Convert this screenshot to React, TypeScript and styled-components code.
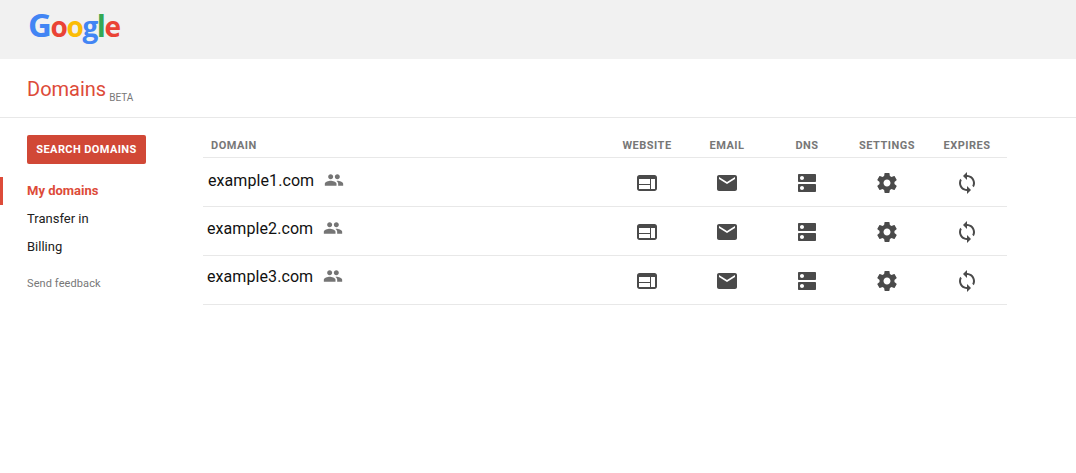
import React from "react";
import styled, { createGlobalStyle } from "styled-components";

const GlobalStyle = createGlobalStyle`
  html, body {
    margin: 0;
    padding: 0;
    background: #fff;
    font-family: Roboto, "Liberation Sans", Arial, sans-serif;
  }
`;

const Header = styled.header`
  height: 59px;
  background: #f1f1f1;
  padding-left: 28px;
  box-sizing: border-box;
`;

const Logo = styled.div`
  font-family: "Open Sans", Lato, sans-serif;
  line-height: 50px;
  font-weight: 700;
  letter-spacing: -1.4px;
  height: 59px;
`;

const LogoLetter = styled.span<{ $color: string; $size: number }>`
  color: ${(p) => p.$color};
  font-size: ${(p) => p.$size}px;
`;

const TitleBar = styled.div`
  height: 59px;
  box-sizing: border-box;
  border-bottom: 1px solid #e8e8e8;
  padding: 16px 0 0 27px;
  display: flex;
  align-items: flex-start;
`;

const Title = styled.h1`
  margin: 0;
  font-size: 20px;
  line-height: 28px;
  font-weight: 400;
  color: #dd4b39;
`;

const Beta = styled.span`
  font-size: 10px;
  line-height: 12px;
  color: #777;
  margin: 17px 0 0 3px;
`;

const Main = styled.div`
  display: flex;
  align-items: flex-start;
`;

const Sidebar = styled.aside`
  width: 203px;
  flex: none;
  padding-top: 17px;
`;

const SearchButton = styled.button`
  display: block;
  width: 119px;
  height: 29px;
  margin-left: 27px;
  padding: 0;
  border: 0;
  border-radius: 2px;
  background: #d14836;
  color: #fff;
  font-family: inherit;
  font-size: 11px;
  font-weight: 700;
  letter-spacing: 0.4px;
`;

const Nav = styled.nav`
  margin-top: 13px;
`;

const NavItem = styled.div<{ $active?: boolean }>`
  height: 28px;
  line-height: 28px;
  box-sizing: border-box;
  padding-left: ${(p) => (p.$active ? 24 : 27)}px;
  border-left: ${(p) => (p.$active ? "3px solid #dd4b39" : "0")};
  font-size: 13px;
  font-weight: ${(p) => (p.$active ? 700 : 400)};
  color: ${(p) => (p.$active ? "#dd4b39" : "#212121")};
`;

const Feedback = styled.div`
  margin: 15px 0 0 27px;
  font-size: 11px;
  line-height: 16px;
  letter-spacing: 0.1px;
  color: #777;
`;

const Table = styled.section`
  width: 804px;
  flex: none;
  padding-top: 20px;
`;

const grid = `
  display: grid;
  grid-template-columns: 1fr repeat(5, 80px);
  box-sizing: border-box;
  border-bottom: 1px solid #e8e8e8;
`;

const HeadRow = styled.div`
  ${grid}
  height: 20px;
`;

const HeadCell = styled.div<{ $left?: boolean }>`
  font-size: 11px;
  line-height: 16px;
  font-weight: 700;
  letter-spacing: 0.5px;
  color: #777;
  text-align: ${(p) => (p.$left ? "left" : "center")};
  padding-left: ${(p) => (p.$left ? "8px" : "0")};
`;

const Row = styled.div`
  ${grid}
  height: 49px;
`;

const DomainCell = styled.div<{ $nudge: number }>`
  display: flex;
  align-items: flex-start;
  padding: ${(p) => 12 - p.$nudge}px 0 0 ${(p) => 5 - Math.min(p.$nudge, 1)}px;
  gap: 10px;
`;

const DomainName = styled.span`
  font-size: 16px;
  line-height: 21px;
  letter-spacing: 0.08px;
  color: #111;
`;

const IconCell = styled.div`
  display: flex;
  justify-content: center;
  padding-top: 13px;
  color: #4a4a4a;
`;

const PeopleIcon = styled.svg`
  width: 20px;
  height: 20px;
  fill: #757575;
`;

const ActionIcon = styled.svg`
  width: 24px;
  height: 24px;
  fill: currentColor;
`;

const icons = {
  website:
    "M4.5 4h15C20.9 4 22 5.1 22 6.500v11c0 1.400-1.100 2.500-2.500 2.500h-15C3.100 20 2 18.900 2 17.500v-11C2 5.100 3.100 4 4.500 4zM4 8v5h11V8H4zm0 6v4h11v-4H4zm12-6v10h4V8h-4z",
  email:
    "M20 4H4c-1.100 0-1.990.9-1.990 2L2 18c0 1.100.9 2 2 2h16c1.100 0 2-.9 2-2V6c0-1.100-.9-2-2-2zm0 4l-8 5-8-5V6l8 5 8-5v2z",
  dns: "M20 13H4c-.55 0-1 .45-1 1v6c0 .55.45 1 1 1h16c.55 0 1-.45 1-1v-6c0-.55-.45-1-1-1zM7 19c-1.100 0-2-.9-2-2s.9-2 2-2 2 .9 2 2-.9 2-2 2zM20 3H4c-.55 0-1 .45-1 1v6c0 .55.45 1 1 1h16c.55 0 1-.45 1-1V4c0-.55-.45-1-1-1zM7 9c-1.100 0-2-.9-2-2s.9-2 2-2 2 .9 2 2-.9 2-2 2z",
  settings:
    "M19.430 12.980c.04-.32.07-.64.07-.98s-.03-.66-.07-.98l2.110-1.650c.19-.15.24-.42.12-.64l-2-3.460c-.12-.22-.39-.3-.61-.22l-2.490 1c-.52-.4-1.080-.73-1.690-.98l-.38-2.650C14.460 2.180 14.250 2 14 2h-4c-.25 0-.46.18-.49.42l-.38 2.650c-.61.25-1.170.59-1.690.98l-2.490-1c-.23-.09-.49 0-.61.22l-2 3.460c-.13.22-.07.49.12.64l2.110 1.650c-.04.32-.07.65-.07.98s.03.66.07.98l-2.110 1.650c-.19.15-.24.42-.12.64l2 3.460c.12.22.39.3.61.22l2.490-1c.52.4 1.080.73 1.690.98l.38 2.650c.03.24.24.42.49.42h4c.25 0 .46-.18.49-.42l.38-2.650c.61-.25 1.170-.59 1.690-.98l2.490 1c.23.09.49 0 .61-.22l2-3.460c.12-.22.07-.49-.12-.64l-2.110-1.650zM12 15.500c-1.930 0-3.500-1.570-3.500-3.500s1.570-3.500 3.500-3.500 3.500 1.570 3.500 3.500-1.570 3.500-3.500 3.500z",
  expires:
    "M12 4V1L8 5l4 4V6c3.310 0 6 2.690 6 6 0 1.010-.25 1.970-.7 2.800l1.460 1.460C19.540 15.030 20 13.570 20 12c0-4.420-3.580-8-8-8zm0 14c-3.310 0-6-2.690-6-6 0-1.010.25-1.970.7-2.800L5.240 7.740C4.460 8.970 4 10.430 4 12c0 4.420 3.580 8 8 8v3l4-4-4-4v3z",
};

const peoplePath =
  "M16 11c1.660 0 2.990-1.340 2.990-3S17.660 5 16 5c-1.660 0-3 1.340-3 3s1.340 3 3 3zm-8 0c1.660 0 2.990-1.340 2.990-3S9.660 5 8 5C6.340 5 5 6.340 5 8s1.340 3 3 3zm0 2c-2.330 0-7 1.170-7 3.500V19h14v-2.500c0-2.330-4.670-3.500-7-3.500zm8 0c-.29 0-.62.02-.97.05 1.160.84 1.970 1.970 1.970 3.450V19h6v-2.500c0-2.330-4.670-3.500-7-3.500z";

const domains = ["example1.com", "example2.com", "example3.com"];
const columns = ["WEBSITE", "EMAIL", "DNS", "SETTINGS", "EXPIRES"];
const logo: [string, string, number][] = [
  ["G", "#4285f4", 33],
  ["o", "#ea4335", 28],
  ["o", "#fbbc05", 28],
  ["g", "#4285f4", 28],
  ["l", "#34a853", 30],
  ["e", "#ea4335", 28],
];

const App: React.FunctionComponent = () => {
  return (
    <>
      <GlobalStyle />
      <Header>
        <Logo>
          {logo.map(([letter, color, size], i) => (
            <LogoLetter key={i} $color={color} $size={size}>
              {letter}
            </LogoLetter>
          ))}
        </Logo>
      </Header>
      <TitleBar>
        <Title>Domains</Title>
        <Beta>BETA</Beta>
      </TitleBar>
      <Main>
        <Sidebar>
          <SearchButton>SEARCH DOMAINS</SearchButton>
          <Nav>
            <NavItem $active>My domains</NavItem>
            <NavItem>Transfer in</NavItem>
            <NavItem>Billing</NavItem>
          </Nav>
          <Feedback>Send feedback</Feedback>
        </Sidebar>
        <Table>
          <HeadRow>
            <HeadCell $left>DOMAIN</HeadCell>
            {columns.map((c) => (
              <HeadCell key={c}>{c}</HeadCell>
            ))}
          </HeadRow>
          {domains.map((d, i) => (
            <Row key={d}>
              <DomainCell $nudge={i}>
                <DomainName>{d}</DomainName>
                <PeopleIcon viewBox="0 0 24 24">
                  <path d={peoplePath} />
                </PeopleIcon>
              </DomainCell>
              {Object.entries(icons).map(([name, path]) => (
                <IconCell key={name}>
                  <ActionIcon viewBox="0 0 24 24">
                    <path d={path} fillRule="evenodd" />
                  </ActionIcon>
                </IconCell>
              ))}
            </Row>
          ))}
        </Table>
      </Main>
    </>
  );
};

export default App;
